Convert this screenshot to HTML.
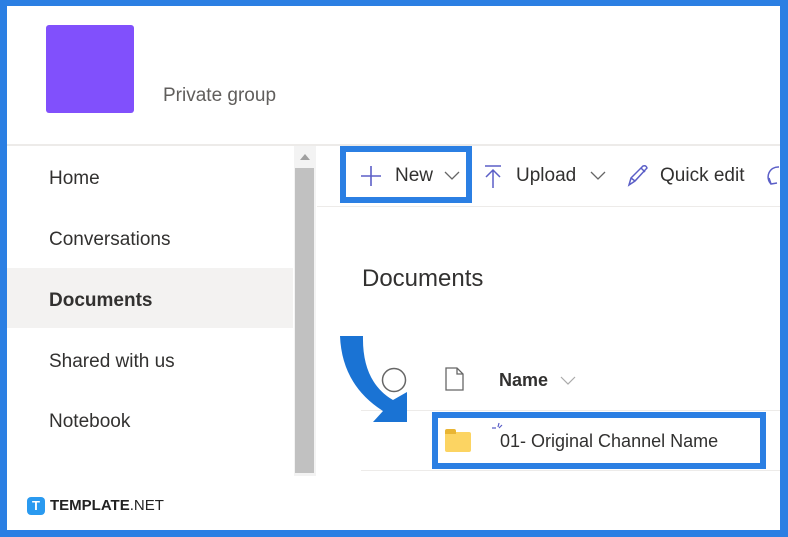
<!DOCTYPE html>
<html><head><style>
*{margin:0;padding:0;box-sizing:border-box}
body{width:788px;height:537px;position:relative;overflow:hidden;background:#2b7fe3;font-family:"Liberation Sans",sans-serif}
.in{position:absolute;left:7px;top:6px;width:773px;height:524px;background:#fff;overflow:hidden}
.a{position:absolute}
.t{position:absolute;white-space:nowrap;color:#323130;font-size:19px}
</style></head><body>
<div class="in">
<div class="a" style="left:39px;top:19px;width:88px;height:88px;background:#8150fc;border-radius:3px"></div>
<div class="t" style="left:156px;top:79px;color:#605e5c">Private group</div>
<div class="a" style="left:0;top:138px;width:773px;height:2px;background:#edebe9"></div>
<div class="a" style="left:0;top:262px;width:286px;height:60px;background:#f3f2f1"></div>
<div class="t" style="left:42px;top:162px">Home</div>
<div class="t" style="left:42px;top:223px">Conversations</div>
<div class="t" style="left:42px;top:284px;font-weight:bold">Documents</div>
<div class="t" style="left:42px;top:345px">Shared with us</div>
<div class="t" style="left:42px;top:405px">Notebook</div>
<div class="a" style="left:287px;top:140px;width:22px;height:330px;background:#f3f3f3"></div>
<div class="a" style="left:288px;top:162px;width:19px;height:305px;background:#c1c1c1"></div>
<div class="a" style="left:293px;top:148px;width:0;height:0;border-left:5px solid transparent;border-right:5px solid transparent;border-bottom:6px solid #a0a0a0"></div>
<div class="a" style="left:310px;top:200px;width:463px;height:1px;background:#edebe9"></div>
<div class="a" style="left:333px;top:140px;width:132px;height:57px;border:6px solid #2b7fe3"></div>
<svg class="a" style="left:352px;top:158px" width="24" height="24"><path d="M12 2V22M2 12H22" stroke="#5b5fc7" stroke-width="1.6"/></svg>
<div class="t" style="left:388px;top:159px">New</div>
<svg class="a" style="left:436px;top:163px" width="18" height="12"><path d="M2 3L9 10L16 3" stroke="#666" fill="none" stroke-width="1.3"/></svg>
<svg class="a" style="left:476px;top:158px" width="20" height="26"><path d="M2 2H18M10 6V24M3 13L10 6L17 13" stroke="#5b5fc7" fill="none" stroke-width="1.5"/></svg>
<div class="t" style="left:509px;top:159px">Upload</div>
<svg class="a" style="left:582px;top:163px" width="18" height="12"><path d="M2 3L9 10L16 3" stroke="#666" fill="none" stroke-width="1.3"/></svg>
<svg class="a" style="left:618px;top:157px" width="26" height="26"><path d="M4 22L6 15L18 3Q21 2 22 5L10 18Z M16 5L20 9 M6 15L10 18" stroke="#5b5fc7" fill="none" stroke-width="1.5"/></svg>
<div class="t" style="left:653px;top:159px">Quick edit</div>
<svg class="a" style="left:760px;top:158px" width="14" height="26"><path d="M12 3A10 10 0 0 0 4 20M2 14L4 20L10 19" stroke="#5b5fc7" fill="none" stroke-width="1.5"/></svg>
<div class="t" style="left:355px;top:259px;font-size:24px">Documents</div>
<svg class="a" style="left:373px;top:360px" width="28" height="28"><circle cx="14" cy="14" r="11.5" stroke="#666" stroke-width="1.5" fill="none"/></svg>
<svg class="a" style="left:437px;top:361px" width="22" height="24"><path d="M2 1H13L19 7V23H2Z M13 1V7H19" stroke="#666" fill="none" stroke-width="1.3"/></svg>
<div class="t" style="left:492px;top:364px;font-weight:bold;font-size:18px">Name</div>
<svg class="a" style="left:552px;top:368px" width="18" height="12"><path d="M2 3L9 10L16 3" stroke="#aaa" fill="none" stroke-width="1.2"/></svg>
<div class="a" style="left:354px;top:404px;width:419px;height:1px;background:#edebe9"></div>
<div class="a" style="left:354px;top:464px;width:419px;height:1px;background:#edebe9"></div>
<div class="a" style="left:425px;top:406px;width:334px;height:57px;border:6px solid #2b7fe3;background:#fff"></div>
<div class="a" style="left:438px;top:426px;width:26px;height:20px;background:#fcd462;border-radius:2px"></div>
<div class="a" style="left:438px;top:423px;width:11px;height:5px;background:#e9b533;border-radius:2px 2px 0 0"></div>
<svg class="a" style="left:484px;top:416px" width="12" height="12"><path d="M1 6H5M8 1L7 5M11 3L8 6" stroke="#5b5fc7" stroke-width="1.2"/></svg>
<div class="t" style="left:493px;top:425px;font-size:18px">01- Original Channel Name</div>
<div class="a" style="left:20px;top:491px;width:18px;height:18px;background:#2a9af0;border-radius:4px;color:#fff;font-weight:bold;font-size:13px;text-align:center;line-height:18px">T</div>
<div class="t" style="left:43px;top:491px;font-size:15px;font-weight:bold;color:#222">TEMPLATE<span style="font-weight:normal">.NET</span></div>
</div>
<svg class="a" style="left:0;top:0" width="788" height="537"><path d="M340 336L363 336Q362 382 393 400L407 392L407 422L373 422L383 411Q342 385 340 336Z" fill="#1a73d4"/></svg>
</body></html>
